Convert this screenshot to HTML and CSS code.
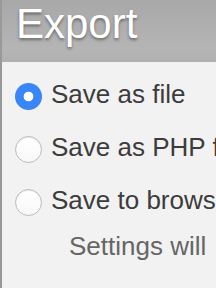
FILE: index.html
```html
<!DOCTYPE html>
<html lang="en">
<head>
    <meta charset="UTF-8">
    <meta name="viewport" content="width=device-width, initial-scale=1.0">
    <title>Export</title>
    <link rel="stylesheet" href="styles.css">
</head>
<body>

    <div class="panel">
        <!-- Header -->
        <div class="panel-header">
            <h1>Export</h1>
        </div>

        <!-- Export options -->
        <div class="options">
            <label class="option">
                <input type="radio" name="export" value="file" checked>
                <span>Save as file</span>
            </label>
            <label class="option">
                <input type="radio" name="export" value="php">
                <span>Save as PHP file</span>
            </label>
            <label class="option">
                <input type="radio" name="export" value="browser">
                <span>Save to browser</span>
            </label>
        </div>

        <p class="note">Settings will</p>
    </div>

</body>
</html>
```

FILE: styles.css
```css
body {
    margin: 0;
    font-family: "Liberation Sans", Arial, sans-serif;
    background: #f2f2f2;
    overflow: hidden;
}

.panel {
    border-left: 2px solid #999;
    min-height: 288px;
    box-sizing: border-box;
    white-space: nowrap;
}

.panel-header {
    height: 62px;
    padding: 3px 0 0 14px;
    box-sizing: border-box;
    background: linear-gradient(#a8a8a8, #b5b5b5 80%, #b0b0b0);
}

.panel-header h1 {
    margin: 0;
    font-size: 42px;
    line-height: 42px;
    font-weight: normal;
    color: #fff;
    text-shadow: 0 2px 3px rgba(0, 0, 0, 0.4);
}

.options {
    padding-top: 8px;
}

.option {
    display: flex;
    align-items: center;
    height: 53px;
    padding-left: 13px;
    font-size: 26px;
    color: #3c3c3c;
}

.option span {
    padding-bottom: 5px;
    margin-left: 9px;
}

.option input {
    appearance: none;
    -webkit-appearance: none;
    width: 27px;
    height: 27px;
    margin: 0;
    flex-shrink: 0;
    border-radius: 50%;
    border: 1px solid #bbb;
    background: linear-gradient(#fff, #f8f8f8);
    box-shadow: inset 0 1px 1px rgba(0, 0, 0, 0.08);
    box-sizing: border-box;
}

.option input:checked {
    border: none;
    box-shadow: none;
    background: radial-gradient(circle, #fff 0 4.5px, #3a85f7 5.2px);
}

.note {
    margin: 2px 0 0 0;
    padding-left: 67px;
    font-size: 26px;
    line-height: 30px;
    color: #666;
}
```
